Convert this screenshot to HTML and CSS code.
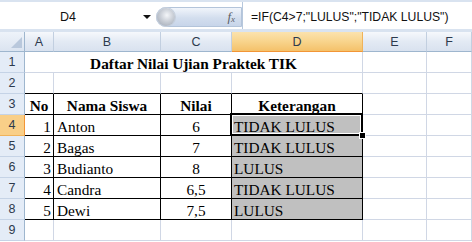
FILE: index.html
```html
<!DOCTYPE html>
<html>
<head>
    <title>Daftar Nilai Ujian Praktek TIK</title>
    <link rel="stylesheet" href="styles.css">
</head>
<body>
    <div class="topbar">
        <div class="namebox">
            <span class="ref">D4</span>
            <span class="drop"></span>
        </div>
        <div class="fx-area">
            <div class="fx-btn">
                <span class="knob"></span>
                <span class="fx"><i>f</i><sub>x</sub></span>
            </div>
        </div>
        <div class="formula">=IF(C4&gt;7;"LULUS";"TIDAK LULUS")</div>
    </div>

    <div class="sheet">
        <!-- column headers -->
        <div class="corner"><span class="tri"></span></div>
        <div class="ch">A</div>
        <div class="ch">B</div>
        <div class="ch">C</div>
        <div class="ch active">D</div>
        <div class="ch">E</div>
        <div class="ch">F</div>

        <!-- row 1 -->
        <div class="rh">1</div>
        <div class="c title">Daftar Nilai Ujian Praktek TIK</div>
        <div class="c"></div>
        <div class="c"></div>

        <!-- row 2 -->
        <div class="rh">2</div>
        <div class="c top"></div>
        <div class="c top"></div>
        <div class="c top"></div>
        <div class="c top"></div>
        <div class="c"></div>
        <div class="c"></div>

        <!-- row 3 -->
        <div class="rh">3</div>
        <div class="c t center bold">No</div>
        <div class="c t center bold">Nama Siswa</div>
        <div class="c t center bold">Nilai</div>
        <div class="c t center bold">Keterangan</div>
        <div class="c"></div>
        <div class="c"></div>

        <!-- row 4 -->
        <div class="rh active">4</div>
        <div class="c t right">1</div>
        <div class="c t name">Anton</div>
        <div class="c t center">6</div>
        <div class="c t gray sel">TIDAK LULUS<span class="selbox"></span><span class="handle"></span></div>
        <div class="c"></div>
        <div class="c"></div>

        <!-- row 5 -->
        <div class="rh">5</div>
        <div class="c t right">2</div>
        <div class="c t name">Bagas</div>
        <div class="c t center">7</div>
        <div class="c t gray">TIDAK LULUS</div>
        <div class="c"></div>
        <div class="c"></div>

        <!-- row 6 -->
        <div class="rh">6</div>
        <div class="c t right">3</div>
        <div class="c t name">Budianto</div>
        <div class="c t center">8</div>
        <div class="c t gray">LULUS</div>
        <div class="c"></div>
        <div class="c"></div>

        <!-- row 7 -->
        <div class="rh">7</div>
        <div class="c t right">4</div>
        <div class="c t name">Candra</div>
        <div class="c t center">6,5</div>
        <div class="c t gray">TIDAK LULUS</div>
        <div class="c"></div>
        <div class="c"></div>

        <!-- row 8 -->
        <div class="rh">8</div>
        <div class="c t right">5</div>
        <div class="c t name">Dewi</div>
        <div class="c t center">7,5</div>
        <div class="c t gray">LULUS</div>
        <div class="c"></div>
        <div class="c"></div>

        <!-- row 9 -->
        <div class="rh">9</div>
        <div class="c"></div>
        <div class="c"></div>
        <div class="c"></div>
        <div class="c"></div>
        <div class="c"></div>
        <div class="c"></div>
    </div>
</body>
</html>
```

FILE: styles.css
```css
body {
    margin: 0;
    padding: 0;
    width: 472px;
    height: 242px;
    overflow: hidden;
    background-color: #ffffff;
    font-family: "Liberation Sans", Arial, sans-serif;
}

/* formula bar */
.topbar {
    display: flex;
    height: 32px;
    box-sizing: border-box;
    padding: 2px 0 3px 0;
    background-color: #d9e3f0;
}

.namebox {
    display: flex;
    align-items: center;
    width: 156px;
    background-color: #ffffff;
    font-size: 12.5px;
    color: #111;
}

.ref {
    margin-left: 60px;
    padding-top: 3px;
}

.drop {
    margin-left: auto;
    margin-right: 5px;
    margin-top: 2px;
    width: 0;
    height: 0;
    border-left: 4px solid transparent;
    border-right: 4px solid transparent;
    border-top: 4px solid #111;
}

.fx-area {
    display: flex;
    align-items: center;
    width: 86px;
    background-color: #ffffff;
    padding-top: 2px;
}

.fx-btn {
    display: flex;
    align-items: center;
    justify-content: space-between;
    width: 86px;
    height: 20px;
    box-sizing: border-box;
    border: 1px solid #b3c4da;
    border-radius: 10px 0 0 10px;
    background: linear-gradient(#f1f5fb, #d3deee 55%, #c7d5ea);
}

.knob {
    width: 18px;
    height: 18px;
    border-radius: 50%;
    background: radial-gradient(circle at 55% 40%, #f4f6f9 0, #c9ced6 45%, #9aa3b0 100%);
    box-shadow: 0 0 0 1px #c5cfdc;
}

.fx {
    margin-right: 6px;
    font-family: "Liberation Serif", serif;
    font-size: 13px;
    color: #5b5f66;
}

.fx sub {
    font-size: 9px;
    font-style: italic;
    vertical-align: -1px;
}

.formula {
    flex-grow: 1;
    display: flex;
    align-items: center;
    padding: 3px 0 0 8px;
    background-color: #ffffff;
    border-left: 1px solid #b7c8dd;
    font-size: 12.2px;
    color: #111;
    white-space: nowrap;
}

/* sheet grid */
.sheet {
    display: grid;
    grid-template-columns: 25px 29px 107px 71px 131px 64px 45px;
    grid-template-rows: 20px repeat(9, 21px);
}

.corner {
    position: relative;
    background: linear-gradient(#eef3fa, #dbe4f0);
    border-right: 1px solid #9eb6ce;
    border-bottom: 1px solid #9eb6ce;
}

.tri {
    position: absolute;
    right: 2px;
    bottom: 3px;
    width: 0;
    height: 0;
    border-left: 11px solid transparent;
    border-bottom: 11px solid #b9c8dc;
}

.ch {
    display: flex;
    align-items: center;
    justify-content: center;
    background: linear-gradient(#f6f8fc, #e3eaf4 50%, #d9e2ef);
    border-right: 1px solid #c2cfe0;
    border-bottom: 1px solid #9eb6ce;
    font-size: 12.5px;
    color: #2d3a4d;
}

.ch.active {
    background: linear-gradient(#fbe2ad, #f8d48c 50%, #f4c16a);
    border-right-color: #f0b35a;
    border-bottom-color: #f29536;
}

.rh {
    display: flex;
    align-items: center;
    justify-content: center;
    background-color: #e4ecf7;
    border-right: 1px solid #9eb6ce;
    border-bottom: 1px solid #c5d3e6;
    font-size: 12.5px;
    color: #2d3a4d;
}

.rh.active {
    background-color: #f9cf88;
    border-right-color: #f29536;
    border-bottom-color: #f0b35a;
}

.c {
    display: flex;
    align-items: flex-end;
    padding: 0 2px 0 2px;
    border-right: 1px solid #d0d7e5;
    border-bottom: 1px solid #d0d7e5;
    font-family: "Liberation Serif", "Times New Roman", serif;
    font-size: 15.3px;
    line-height: 17px;
    color: #000;
    white-space: nowrap;
}

.title {
    grid-column: span 4;
    justify-content: center;
    font-weight: bold;
}

.top {
    border-bottom-color: #000;
}

.t {
    border-right-color: #000;
    border-bottom-color: #000;
}

.center {
    justify-content: center;
}

.right {
    justify-content: flex-end;
}

.bold {
    font-weight: bold;
}

.name {
    padding-left: 3px;
}

.gray {
    background-color: #c0c0c0;
}

.sel {
    position: relative;
}

.selbox {
    position: absolute;
    left: -2px;
    top: -2px;
    right: -1px;
    bottom: -1px;
    border: 2px solid #000;
    box-shadow: inset 0 0 0 1px #ffffff;
    pointer-events: none;
}

.handle {
    position: absolute;
    right: -4px;
    bottom: -4px;
    width: 5px;
    height: 5px;
    background-color: #000;
    border: 1px solid #ffffff;
}
```
